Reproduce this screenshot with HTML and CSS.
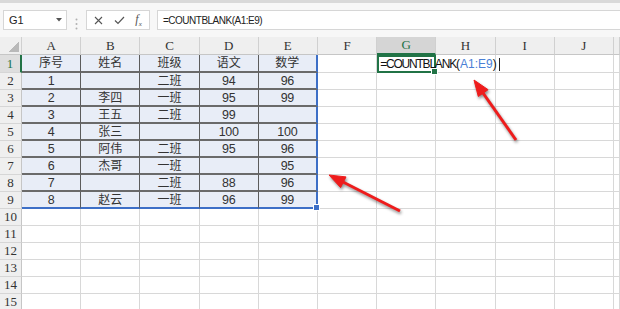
FILE: index.html
```html
<!DOCTYPE html>
<html lang="zh-CN">
<head>
    <meta charset="UTF-8">
    <title>COUNTBLANK</title>
    <link rel="stylesheet" href="styles.css">
</head>
<body>

<div class="topband"></div>
<div class="fbar">
    <div class="namebox">
        <span>G1</span>
        <svg width="6" height="4" viewBox="0 0 6 4"><path d="M0 0H6L3 3.5Z" fill="#555"/></svg>
    </div>
    <div class="sep">
        <svg width="3" height="12" viewBox="0 0 3 12"><circle cx="1.5" cy="1.5" r="1" fill="#b0b0b0"/><circle cx="1.5" cy="6" r="1" fill="#b0b0b0"/><circle cx="1.5" cy="10.5" r="1" fill="#b0b0b0"/></svg>
    </div>
    <div class="btns">
        <svg width="9" height="9" viewBox="0 0 9 9"><path d="M1 1L8 8M8 1L1 8" stroke="#555" stroke-width="1.1"/></svg>
        <svg width="11" height="9" viewBox="0 0 11 9"><path d="M1 4.5L4 7.5L10 1" stroke="#555" stroke-width="1.2" fill="none"/></svg>
        <span class="fx"><i>f</i><sub>x</sub></span>
    </div>
    <div class="finput">=COUNTBLANK(A1:E9)</div>
</div>

<table class="sheet">
    <colgroup>
        <col class="rh">
        <col class="c" span="10">
        <col>
    </colgroup>
    <thead>
        <tr>
            <th class="corner"></th>
            <th>A</th><th>B</th><th>C</th><th>D</th><th>E</th><th>F</th>
            <th class="colsel">G</th><th>H</th><th>I</th><th>J</th><th></th>
        </tr>
    </thead>
    <tbody>
        <tr>
            <th class="rowsel">1</th>
            <td class="d">序号</td><td class="d">姓名</td><td class="d">班级</td><td class="d">语文</td><td class="d e">数学</td>
            <td></td>
            <td class="active"><span class="ftxt">=COUNTBLANK<span class="pn">(</span><span class="ref">A1:E9</span><span class="pn">)</span></span><span class="caret"></span></td>
            <td></td><td></td><td></td><td></td>
        </tr>
        <tr>
            <th>2</th>
            <td class="d n">1</td><td class="d"></td><td class="d">二班</td><td class="d n">94</td><td class="d e n">96</td>
            <td></td><td></td><td></td><td></td><td></td><td></td>
        </tr>
        <tr>
            <th>3</th>
            <td class="d n">2</td><td class="d">李四</td><td class="d">一班</td><td class="d n">95</td><td class="d e n">99</td>
            <td></td><td></td><td></td><td></td><td></td><td></td>
        </tr>
        <tr>
            <th>4</th>
            <td class="d n">3</td><td class="d">王五</td><td class="d">二班</td><td class="d n">99</td><td class="d e n"></td>
            <td></td><td></td><td></td><td></td><td></td><td></td>
        </tr>
        <tr>
            <th>5</th>
            <td class="d n">4</td><td class="d">张三</td><td class="d"></td><td class="d n">100</td><td class="d e n">100</td>
            <td></td><td></td><td></td><td></td><td></td><td></td>
        </tr>
        <tr>
            <th>6</th>
            <td class="d n">5</td><td class="d">阿伟</td><td class="d">二班</td><td class="d n">95</td><td class="d e n">96</td>
            <td></td><td></td><td></td><td></td><td></td><td></td>
        </tr>
        <tr>
            <th>7</th>
            <td class="d n">6</td><td class="d">杰哥</td><td class="d">一班</td><td class="d n"></td><td class="d e n">95</td>
            <td></td><td></td><td></td><td></td><td></td><td></td>
        </tr>
        <tr>
            <th>8</th>
            <td class="d n">7</td><td class="d"></td><td class="d">二班</td><td class="d n">88</td><td class="d e n">96</td>
            <td></td><td></td><td></td><td></td><td></td><td></td>
        </tr>
        <tr class="last">
            <th>9</th>
            <td class="d n">8</td><td class="d">赵云</td><td class="d">一班</td><td class="d n">96</td><td class="d e n handle">99</td>
            <td></td><td></td><td></td><td></td><td></td><td></td>
        </tr>
        <tr><th>10</th><td></td><td></td><td></td><td></td><td></td><td></td><td></td><td></td><td></td><td></td><td></td></tr>
        <tr><th>11</th><td></td><td></td><td></td><td></td><td></td><td></td><td></td><td></td><td></td><td></td><td></td></tr>
        <tr><th>12</th><td></td><td></td><td></td><td></td><td></td><td></td><td></td><td></td><td></td><td></td><td></td></tr>
        <tr><th>13</th><td></td><td></td><td></td><td></td><td></td><td></td><td></td><td></td><td></td><td></td><td></td></tr>
        <tr><th>14</th><td></td><td></td><td></td><td></td><td></td><td></td><td></td><td></td><td></td><td></td><td></td></tr>
        <tr><th>15</th><td></td><td></td><td></td><td></td><td></td><td></td><td></td><td></td><td></td><td></td><td></td></tr>
        <tr><th>16</th><td></td><td></td><td></td><td></td><td></td><td></td><td></td><td></td><td></td><td></td><td></td></tr>
    </tbody>
</table>

<!-- annotation arrows drawn over the sheet -->
<svg class="arrows" width="620" height="309" viewBox="0 0 620 309">
    <g fill="#ee1c1c" stroke="#ee1c1c">
        <line x1="400" y1="211" x2="343" y2="182" stroke-width="3"/>
        <path d="M329 175L346 176.9L340.6 187.6Z" stroke-width="1"/>
        <line x1="516" y1="140" x2="483" y2="93" stroke-width="3"/>
        <path d="M474 80L488.1 89.7L478.3 96.5Z" stroke-width="1"/>
    </g>
</svg>

</body>
</html>
```

FILE: styles.css
```css
body {
    margin: 0;
    width: 620px;
    height: 309px;
    overflow: hidden;
    position: relative;
    background-color: #fff;
    font-family: "Liberation Sans", "Noto Sans CJK SC", sans-serif;
    color: #333;
}
.topband {
    height: 3px;
    background-color: #d9d9d9;
}
.fbar {
    height: 34px;
    box-sizing: border-box;
    padding: 7px 0 0 3px;
    display: flex;
    background-color: #f7f7f7;
}
.namebox, .btns, .finput {
    height: 20px;
    box-sizing: border-box;
    border: 1px solid #d6d6d6;
    background-color: #fff;
    display: flex;
    align-items: center;
}
.namebox {
    width: 64px;
    justify-content: space-between;
    padding: 0 4px 0 5px;
    font-size: 11px;
    color: #222;
}
.sep {
    width: 19px;
    display: flex;
    align-items: center;
    justify-content: center;
}
.btns {
    width: 64px;
    justify-content: space-around;
    padding: 0 2px;
}
.fx {
    font-family: "Liberation Serif", serif;
    font-size: 12px;
    color: #555;
}
.fx sub {
    font-size: 7px;
    font-style: italic;
}
.finput {
    flex: 1;
    margin-left: 7px;
    border-right: none;
    padding-left: 5px;
    font-size: 10px;
    letter-spacing: -0.5px;
    color: #222;
}
.sheet {
    border-collapse: separate;
    border-spacing: 0;
    table-layout: fixed;
    width: 620px;
}
.sheet col.rh {
    width: 22px;
}
.sheet col.c {
    width: 59.2px;
}
.sheet th, .sheet td {
    padding: 0;
    box-sizing: border-box;
    white-space: nowrap;
    overflow: visible;
}
.sheet thead th {
    height: 16px;
    background-color: #efefef;
    border-right: 1px solid #d0d0d0;
    border-bottom: 1px solid #c6c6c6;
    font-family: "Liberation Serif", serif;
    font-size: 13px;
    font-weight: normal;
    color: #333;
}
.sheet thead th.corner {
    background: #efefef linear-gradient(135deg, transparent 50%, #b9b9b9 50%) no-repeat right 2px bottom 2px / 10px 10px;
}
.sheet thead th.colsel {
    background-color: #d5d5d5;
    color: #217346;
    border-bottom: 2px solid #217346;
}
.sheet tbody th {
    height: 16.4px;
    background-color: #efefef;
    border-right: 1px solid #c6c6c6;
    border-bottom: 1px solid #d6d6d6;
    font-family: "Liberation Serif", serif;
    font-size: 13px;
    font-weight: normal;
    color: #333;
}
.sheet tbody th.rowsel {
    background-color: #dedede;
    color: #217346;
    border-right: 2px solid #217346;
}
.sheet td {
    height: 16.4px;
    border-right: 1px solid #d8d8d8;
    border-bottom: 1px solid #d8d8d8;
    text-align: center;
    font-size: 12px;
    line-height: 14px;
}
.sheet td.d {
    background-color: #e8edf7;
    border-right-color: #5c5c5c;
    border-bottom: 2px solid #6a6a6a;
}
.sheet td.n {
    font-size: 12.5px;
    letter-spacing: -0.3px;
    padding-top: 1px;
}
.sheet td.e {
    border-right: 2px solid #3d6fc7;
}
.sheet tr.last td.d {
    border-bottom: 2px solid #3d6fc7;
}
.sheet td.handle {
    position: relative;
}
.sheet td.handle::after {
    content: "";
    position: absolute;
    right: -4px;
    bottom: -4px;
    width: 5px;
    height: 5px;
    background-color: #3d6fc7;
    border: 1px solid #fff;
}
.sheet td.active {
    position: relative;
    border: 2px solid #217346;
    text-align: left;
    padding-left: 1px;
    color: #111;
}
.sheet td.active::after {
    content: "";
    position: absolute;
    right: -4px;
    bottom: -4px;
    width: 5px;
    height: 5px;
    background-color: #217346;
    border: 1px solid #fff;
}
.ftxt {
    font-size: 12px;
    letter-spacing: -1.2px;
}
.ftxt .pn {
    letter-spacing: 0;
}
.ftxt .ref {
    color: #4a7fd6;
    letter-spacing: 0;
}
.caret {
    display: inline-block;
    width: 1px;
    height: 13px;
    margin-left: 2px;
    vertical-align: middle;
    background-color: #222;
}
.arrows {
    position: absolute;
    top: 0;
    left: 0;
    pointer-events: none;
    filter: drop-shadow(1px 2px 1.5px rgba(0, 0, 0, 0.45));
}
```
